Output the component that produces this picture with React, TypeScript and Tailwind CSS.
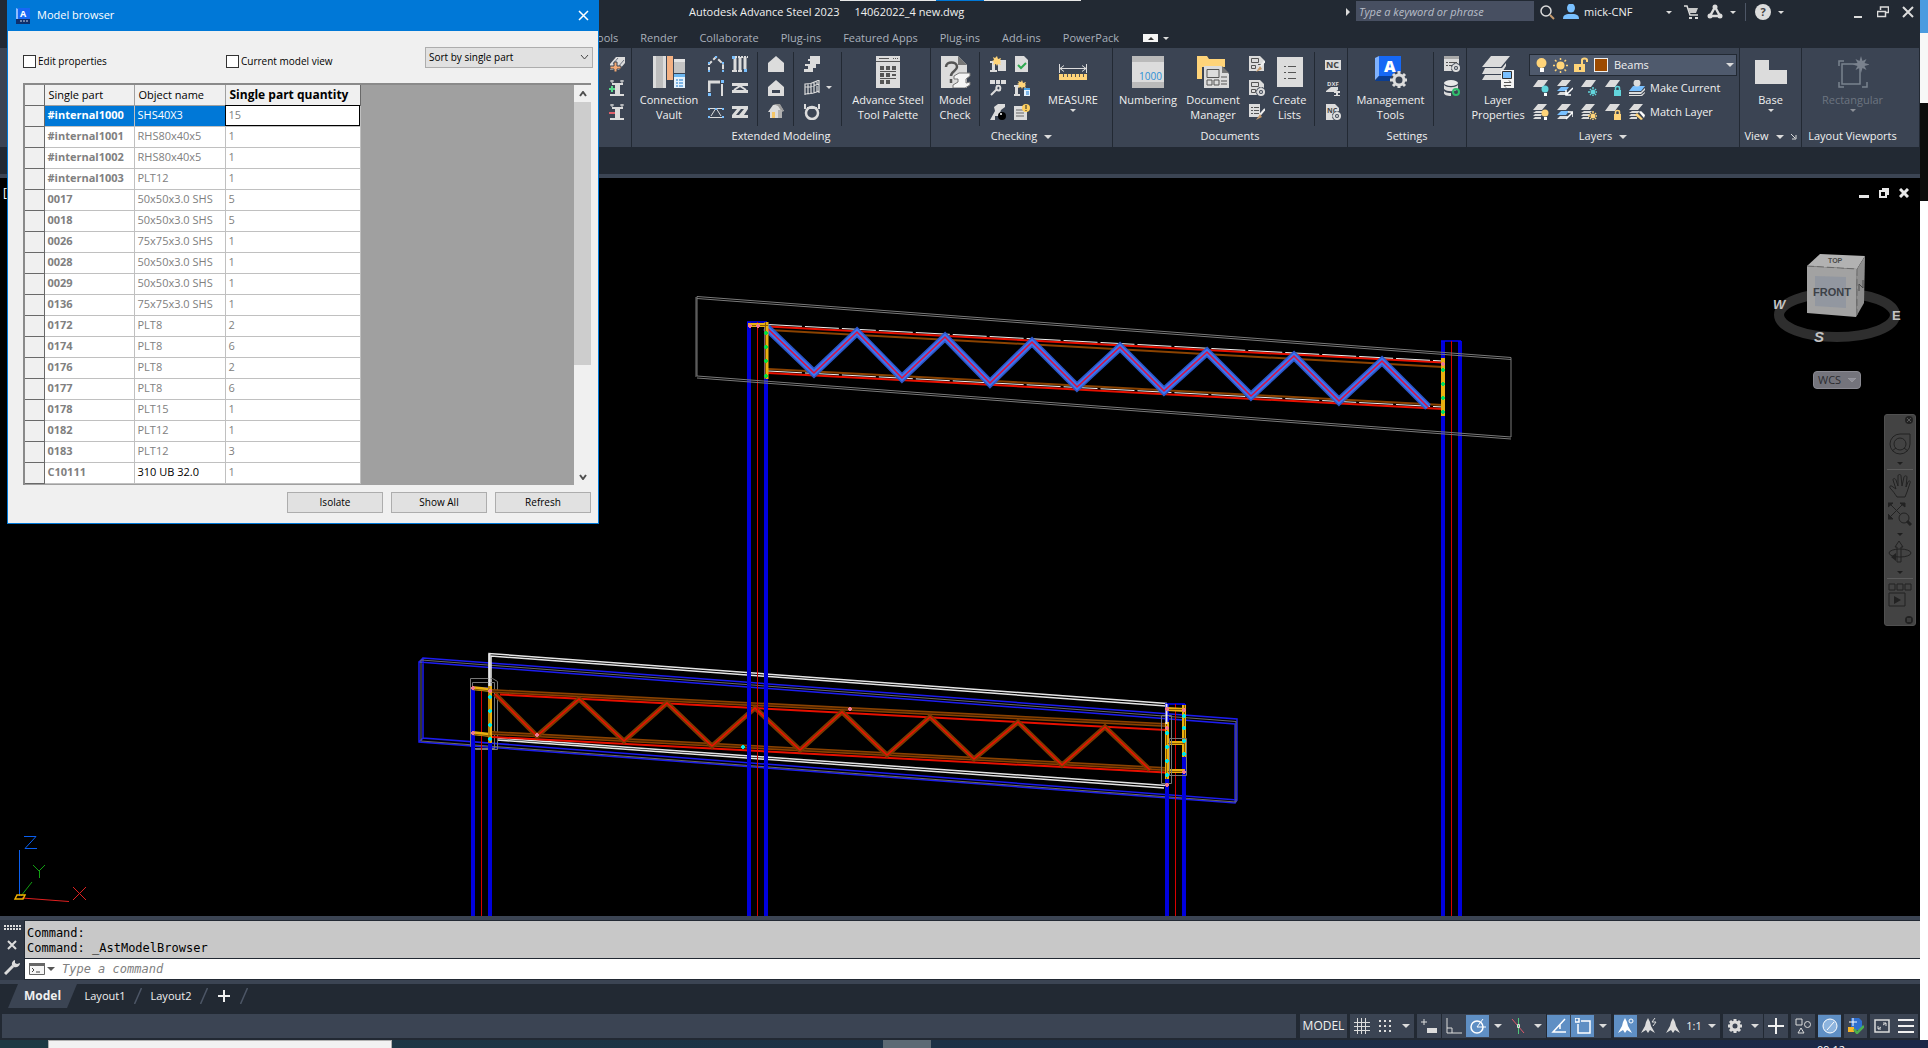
import React, { useState } from 'react';

interface IconProps {
  w?: number;
  h?: number;
  children: React.ReactNode;
}

const Icon: React.FC<IconProps> = ({ w = 16, h = 16, children }) => (
  <svg width={w} height={h} viewBox={`0 0 ${w} ${h}`} fill="none" className="block shrink-0" aria-hidden="true">
    {children}
  </svg>
);

const Caret: React.FC<{ big?: boolean }> = ({ big }) => (
  <svg width={big ? 8 : 6} height={big ? 4 : 3} viewBox="0 0 8 4" className="block shrink-0" aria-hidden="true">
    <path d="M0 0h8L4 4z" fill="#dcdcdc" />
  </svg>
);

const Divider = () => <div className="mt-1 mr-[10px] ml-[9px] h-[74px] w-px shrink-0 bg-[#222933]" />;

const IconColumn: React.FC<{ items: [string, React.ReactNode][] }> = ({ items }) => (
  <div className="flex w-4 shrink-0 flex-col gap-2 pt-2">
    {items.map(([label, icon]) => (
      <button key={label} aria-label={label} className="block h-4 w-4">
        {icon}
      </button>
    ))}
  </div>
);

interface BigButtonProps {
  icon: React.ReactNode;
  lines: string[];
  className: string;
  caret?: boolean;
  disabled?: boolean;
}

const BigButton: React.FC<BigButtonProps> = ({ icon, lines, className, caret, disabled }) => (
  <button
    disabled={disabled}
    className={`flex flex-col items-center pt-2 text-[11px] leading-[15px] whitespace-nowrap ${disabled ? 'text-[#6c7480]' : 'text-[#f0f0f0]'} ${className}`}
  >
    <span className="flex h-8 items-center justify-center">{icon}</span>
    <span className="mt-1 block">
      {lines.map((line) => (
        <span key={line} className="block">{line}</span>
      ))}
    </span>
    {caret && (
      <span className={`mt-[2px] ${disabled ? 'opacity-50' : ''}`}>
        <Caret />
      </span>
    )}
  </button>
);

interface PanelProps {
  title: string;
  className: string;
  caret?: boolean;
  launcher?: boolean;
  children: React.ReactNode;
}

const Panel: React.FC<PanelProps> = ({ title, className, caret, launcher, children }) => (
  <section className={`flex h-full flex-col border-r border-[#222933] ${className}`}>
    <div className="flex h-[78px]">{children}</div>
    <div className="flex h-[21px] items-center justify-center gap-[7px] text-[11px] whitespace-nowrap text-[#f0f0f0]">
      {title}
      {caret && <Caret big />}
      {launcher && (
        <Icon w={6} h={6}>
          <path d="M0 0l4 4M5 1v4H1" stroke="#dcdcdc" />
        </Icon>
      )}
    </div>
  </section>
);

/* ---------- ribbon icons ---------- */

const IBeam: React.FC<{ mark: string; minus?: boolean }> = ({ mark, minus }) => (
  <Icon>
    <path d="M1 14h14v2H1zM6 3h5v11H6zM3 3h11v2H3z" fill="#dcdcdc" />
    <path d="M3 0v3M5 1h-4M13 0v3M11 1h4" stroke="#dcdcdc" />
    <path d={minus ? 'M0 8h6v2H0z' : 'M0 8h2V6h2v2h2v2H4v2H2v-2H0z'} fill={mark} />
  </Icon>
);

const JointIcon = (
  <Icon>
    <path d="M1 8L7 1h9v6l-6 7H1z" fill="#dcdcdc" />
    <path d="M4 8l5-6M9 11l6-7" stroke="#6b7280" />
    <path d="M1 10h4V6h3v4h4v3H8v3H5v-3H1z" fill="#f4a873" stroke="#3b4453" />
  </Icon>
);

const VaultIcon = (
  <Icon w={32} h={32}>
    <path d="M0 0h13v32H0z" fill="#dcdcdc" />
    <path d="M3 0h7v32H3z" fill="#bdbdbd" />
    <path d="M14 0h6v24h-6z" fill="#f4b183" />
    <path d="M21 3h11v14H21z" fill="#c4c4c4" />
    <path d="M21 3h11v3H21z" fill="#e4e4e4" />
    <path d="M21 18h11v14H21z" fill="#e6f3fd" />
    <path d="M21 18h11v3H21z" fill="#6cb7f0" />
    <path d="M23 24h2M26 24h4M23 27h2M26 27h4M23 30h2M26 30h4" stroke="#1779ce" />
  </Icon>
);

const modelingA: [string, React.ReactNode][] = [
  ['Portal frame', <Icon><path d="M1 16V8l7-7 7 7v8" stroke="#dcdcdc" strokeWidth="2" strokeDasharray="5 2" /><path d="M7 0h2v2H7zM0 6h2v2H0zM14 6h2v2h-2zM0 14h2v2H0zM14 14h2v2h-2z" fill="#79c0ff" /></Icon>],
  ['Frame corner', <Icon><path d="M1 12V2h11" stroke="#dcdcdc" strokeWidth="3" /><path d="M14 4v12" stroke="#dcdcdc" strokeWidth="2" /><path d="M13 0h3v3h-3zM0 13h3v3H0z" fill="#79c0ff" /></Icon>],
  ['Truss', <Icon><path d="M0 4.500h16M0 13.500h16M3 12l5-8 5 8" stroke="#dcdcdc" /><path d="M0 4h2v2H0zM7 4h2v2H7zM14 4h2v2h-2zM0 12h2v2H0zM14 12h2v2h-2z" fill="#79c0ff" /></Icon>],
];

const modelingB: [string, React.ReactNode][] = [
  ['Columns', <Icon><path d="M3 1v15M8 1v15M13 1v12" stroke="#dcdcdc" strokeWidth="3" /><path d="M0 1h16M0 15h10" stroke="#dcdcdc" strokeDasharray="2 1" strokeWidth="2" /><path d="M0 0h3v3H0zM12 13h3v3h-3z" fill="#79c0ff" /></Icon>],
  ['Bracing', <Icon><path d="M0 3h16v3H0zM0 10h16v3H0z" fill="#dcdcdc" /><path d="M2 10l6-4 6 4" stroke="#dcdcdc" strokeWidth="2" /></Icon>],
  ['Purlins', <Icon><path d="M0 2h16v3l-4 6h4v3H0v-3l5-6H0zM9 5l-5 6h3l5-6z" fill="#dcdcdc" fillRule="evenodd" /></Icon>],
];

const modelingC: [string, React.ReactNode][] = [
  ['House', <Icon><path d="M8 0l8 7v9H0V7z" fill="#dcdcdc" /></Icon>],
  ['House opening', <Icon><path d="M8 0l8 7v9H0V7zM4 10v3h8v-3z" fill="#dcdcdc" fillRule="evenodd" /></Icon>],
  ['House view', <Icon><path d="M5 1h7l4 6h-2v7H2V8H0z" fill="#dcdcdc" /><path d="M5 0h7l4 7-2 1-4-6z" fill="#9a9a9a" /><path d="M10 6h4v8h-4z" fill="#b0b0b0" /><path d="M4 8h3v6H4z" fill="#f6c767" /></Icon>],
];

const modelingD: [string, React.ReactNode][] = [
  ['Stairs', <Icon><path d="M6 0h10v8h-4v4H9v4H0v-3h4v-3H1V8h5V5H4V3h2z" fill="#dcdcdc" /></Icon>],
  ['Railing', <Icon><path d="M1 15V4c4 0 9-1 14-4v13M1 7c4 0 9-1 14-3M1 14c5 0 10-1 14-3M4 4v10M7 3v11M10 3v10M13 2v10" stroke="#dcdcdc" strokeWidth="1.200" /></Icon>],
  ['Ladder', <Icon><circle cx="8" cy="9" r="6" stroke="#dcdcdc" strokeWidth="2.500" /><path d="M1 0v5M15 0v5M3 4h10" stroke="#dcdcdc" strokeWidth="2" /></Icon>],
];

const PaletteIcon = (
  <Icon w={24} h={32}>
    <path d="M0 0h24v32H0z" fill="#dcdcdc" />
    <path d="M0 5h24v1H0zM3 2h10v1H3zM17 2h1v1h-1zM19 2h1v1h-1zM21 2h1v1h-1z" fill="#555" />
    <path d="M4 10h4v4H4zM10 10h4v4h-4zM16 10h4v4h-4zM4 17h4v4H4zM10 17h4v4h-4zM4 24h4v4H4zM10 24h4v4h-4z" fill="#555" />
    <path d="M4 15h16v1H4zM4 22h16v1H4zM16 18h4v2h-4z" fill="#555" />
  </Icon>
);

const ModelCheckIcon = (
  <Icon w={32} h={32}>
    <path d="M2 0h17l9 9v23H2z" fill="#dcdcdc" />
    <path d="M19 0l9 9h-9z" fill="#777" />
    <path d="M7 11c0-6 11-6 11 0 0 4-6 4-6 9M12 23v4" stroke="#555" strokeWidth="2.500" />
    <path d="M15 20l5-3h11v3l-4 3v4l4-1v3l-5 3H14v-3l5-3v-3h-4z" fill="#f5f5f5" stroke="#777" />
  </Icon>
);

const checkA: [string, React.ReactNode][] = [
  ['Clash', <Icon><path d="M0 5h7v2H5v7h2v2H0v-2h2V7H0zM8 4h8v11H8z" fill="#dcdcdc" /><path d="M7 0l1 3 3-1-1 3 1 1-1 1 1 2-3-1-1 2-1-2-3 1 1-3-2-1 2-1-1-3 2 1z" fill="#ffd479" /></Icon>],
  ['Repair', <Icon><path d="M0 0h5v4H0zM6 0h4v4H6zM11 0h5v4h-5z" fill="#dcdcdc" /><path d="M1 15l6-6M7 6c3-1 4 1 3 4-2 1-5 0-3-4z" stroke="#dcdcdc" strokeWidth="2" /></Icon>],
  ['Weight', <Icon><path d="M4 3l4-3h7v3l-4 3-2 6H5v4H0l5-9z" fill="#dcdcdc" /><circle cx="12" cy="12" r="4" fill="#000" /><circle cx="11" cy="10" r="1" fill="#fff" /></Icon>],
];

const checkB: [string, React.ReactNode][] = [
  ['Audit', <Icon><path d="M1 0h9l4 4v12H1z" fill="#dcdcdc" /><path d="M4 9l3 3 5-5" stroke="#2ea84f" strokeWidth="2" /></Icon>],
  ['Collision list', <Icon><path d="M0 5h6v2H4v7h2v2H0v-2h1V7H0z" fill="#dcdcdc" /><path d="M8 0l1 3 3-1-1 2 1 1-1 1 1 2-3-1-1 2-1-2-3 1 1-3-2-1 2-1-1-2 3 1z" fill="#ffd479" /><path d="M10 8h6v8h-6z" fill="#e6f3fd" /><path d="M10 8h6v2h-6z" fill="#4ba3e8" /><path d="M12 12h3M12 14h3" stroke="#1779ce" /></Icon>],
  ['Warnings', <Icon><path d="M0 2h13v14H0z" fill="#dcdcdc" /><path d="M2 6h7M2 9h8M2 12h8" stroke="#666" /><circle cx="12" cy="4" r="4" fill="#ffcf5e" /><path d="M12 1v4M12 6v1" stroke="#222" /></Icon>],
];

const MeasureIcon = (
  <Icon w={28} h={16}>
    <path d="M0 10h28v6H0z" fill="#ffd479" />
    <path d="M.5 0v9M27.500 0v9" stroke="#dcdcdc" />
    <path d="M1 4.500h26M5 1.500l-4 3 4 3M23 1.500l4 3-4 3" stroke="#dcdcdc" />
    <path d="M4.500 10v3M8.500 10v3M12.500 10v3M16.500 10v3M20.500 10v3M24.500 10v3" stroke="#555" />
  </Icon>
);

const NumberingIcon = (
  <Icon w={32} h={32}>
    <path d="M0 0h32v32H0z" fill="#dcdcdc" />
    <path d="M0 0h32v6H0zM0 26h32v6H0z" fill="#bababa" />
    <text x="7" y="24" fontSize="10" fill="#2b8fd6" fontFamily="Open Sans, sans-serif">1000</text>
  </Icon>
);

const DocManagerIcon = (
  <Icon w={32} h={32}>
    <path d="M0 0h10l2 3h16v8H5v12H0z" fill="#ffd479" />
    <path d="M7 10h17l8 8v14H7z" fill="#dcdcdc" />
    <path d="M25 10l7 7h-7z" fill="#777" />
    <path d="M10 13.500h12v8H10zM10 24h5v5h-5zM17 24h5v5h-5zM24 21h6M24 25h6M24 28h6" stroke="#555" />
  </Icon>
);

const sheet = (
  <>
    <path d="M0 0h11l4 4v11H0z" fill="#dcdcdc" />
    <path d="M2.500 2.500h7v4h-7zM2.500 9.500h4v3h-4zM9 8.500h5" stroke="#555" />
  </>
);
const smallGear = (
  <>
    <circle cx="12" cy="12" r="3" stroke="#3b4453" strokeWidth="4" />
    <circle cx="12" cy="12" r="3" stroke="#dcdcdc" strokeWidth="2" />
    <path d="M12 7v2M12 15v1M7 12h2M15 12h1M9 9l1 1M15 15l-1-1M15 9l-1 1M9 15l1-1" stroke="#dcdcdc" />
  </>
);

const docsA: [string, React.ReactNode][] = [
  ['Drawing styles', <Icon>{sheet}<path d="M16 5l-6 7" stroke="#eee" strokeWidth="2" /><path d="M11 10l-4 6 6-3z" fill="#c59a6c" /></Icon>],
  ['Drawing processes', <Icon>{sheet}{smallGear}</Icon>],
  ['List styles', <Icon><path d="M0 0h11v13H0z" fill="#dcdcdc" /><path d="M2 3.500h2M5 3.500h5M2 6.500h2M5 6.500h5M2 9.500h2M5 9.500h5" stroke="#555" /><path d="M16 5l-6 7" stroke="#eee" strokeWidth="2" /><path d="M11 10l-4 6 6-3z" fill="#c59a6c" /></Icon>],
];

const CreateListsIcon = (
  <Icon w={26} h={30}>
    <path d="M0 0h26v30H0z" fill="#dcdcdc" />
    <path d="M7 9.500h2M11 9.500h8M7 15.500h2M11 15.500h8M7 21.500h2M11 21.500h8" stroke="#555" />
  </Icon>
);

const docsB: [string, React.ReactNode][] = [
  ['NC files', <Icon><path d="M0 4h16v10H0z" fill="#dcdcdc" /><text x="1" y="12" fontSize="9" fontWeight="700" fill="#444" fontFamily="Open Sans, sans-serif">NC</text></Icon>],
  ['DXF files', <Icon><text x="2" y="6" fontSize="6" fontWeight="700" fill="#dcdcdc" fontFamily="Open Sans, sans-serif">DXF</text><path d="M1 11l5-4h7v3l-3 2H1zM9 11h6v2h-2v2h2v1H9v-1h2v-2H9z" fill="#dcdcdc" /></Icon>],
  ['NC settings', <Icon><path d="M1 0h9l4 4v12H1z" fill="#dcdcdc" /><text x="2" y="9" fontSize="7" fontWeight="700" fill="#444" fontFamily="Open Sans, sans-serif">NC</text>{smallGear}</Icon>],
];

const ManagementIcon = (
  <Icon w={32} h={32}>
    <path d="M0 2l4-2v20l-4 4z" fill="#7fb2ff" />
    <path d="M4 0h22v20H4z" fill="#1668f5" />
    <path d="M4 20h22l-3 5H0z" fill="#0b3d91" />
    <text x="9" y="16" fontSize="16" fontWeight="800" fill="#fff" fontFamily="Open Sans, sans-serif">A</text>
    <circle cx="24" cy="24" r="5" stroke="#3b4453" strokeWidth="7" />
    <path d="M24 15v17M15 24h17M18 18l12 12M30 18L18 30" stroke="#dcdcdc" strokeWidth="3" />
    <circle cx="24" cy="24" r="5" fill="#3b4453" stroke="#dcdcdc" strokeWidth="3" />
  </Icon>
);

const settingsCol: [string, React.ReactNode][] = [
  ['Palette settings', <Icon><path d="M0 0h15v15H0z" fill="#dcdcdc" /><path d="M0 0h15v3H0z" fill="#a8a8a8" /><path d="M2 6.500h2M5 6.500h8M2 9.500h2M5 9.500h5" stroke="#555" />{smallGear}</Icon>],
  ['Database', <Icon><ellipse cx="7" cy="3" rx="7" ry="3" fill="#e8e8e8" /><path d="M0 5c3 3 11 3 14 0v4c-3 3-11 3-14 0zM0 11c2 2 5 2 7 2v3c-4 0-7-1-7-3z" fill="#dcdcdc" /><circle cx="12" cy="12" r="3" stroke="#2fbf6b" strokeWidth="2" /></Icon>],
];

const LayerPropsIcon = (
  <Icon w={32} h={32}>
    <path d="M9 0h19l-9 11H0z" fill="#dcdcdc" />
    <path d="M3 12h17l4-5v3l-5 8H0zM3 19h16v5H0z" fill="#dcdcdc" />
    <path d="M19 14h13v18H19z" fill="#f5f5f5" />
    <path d="M20.500 15.500h9v7h-9z" fill="#79c0ff" stroke="#333" />
    <path d="M22 26.500h7l-2-2M29 29.500h-7l2 2" stroke="#555" />
  </Icon>
);

const sheetTop = <path d="M5 0h10l-5 7H0z" fill="#dcdcdc" />;
const stack = <path d="M5 0h9L9 6H0zM3 7h8l-2 2H0zM2 10h7l-1 2H0zM2 13h6v2H0z" fill="#dcdcdc" />;
const stackBlue = (
  <>
    <path d="M5 0h9L9 6H0zM3 12h8l-2 3H0z" fill="#dcdcdc" />
    <path d="M4 7h8l-3 4H0z" fill="#79c0ff" />
  </>
);
const smallLock = (c: string) => (
  <>
    <path d="M9 10h7v6H9z" fill={c} />
    <path d="M10.500 10V8c0-2 4-2 4 0v2" stroke={c} strokeWidth="1.500" />
  </>
);
const smallSun = (c: string) => (
  <>
    <circle cx="12" cy="12" r="2.500" fill={c} />
    <path d="M12 7v2M12 15v1M7 12h2M15 12h1M9 9l1 1M15 15l-1-1M15 9l-1 1M9 15l1-1" stroke={c} strokeWidth="1.500" />
  </>
);
const smallBulb = (c: string) => (
  <>
    <circle cx="12" cy="9" r="3.500" fill={c} />
    <path d="M11 13h3v3h-3z" fill="#fff" />
  </>
);

const layerRows: { label: string; icons: [string, React.ReactNode][] }[] = [
  {
    label: 'Make Current',
    icons: [
      ['Layer off', <Icon>{sheetTop}{smallBulb('#62d5dc')}</Icon>],
      ['Isolate layer', <Icon>{stackBlue}<path d="M16 8l-6 6M9 10v5h5" stroke="#fff" strokeWidth="1.500" /></Icon>],
      ['Freeze layer', <Icon>{sheetTop}{smallSun('#62d5dc')}</Icon>],
      ['Lock layer', <Icon>{sheetTop}{smallLock('#62d5dc')}</Icon>],
      ['Make Current', <Icon><path d="M4 6h12l-4 5H0z" fill="#79c0ff" /><circle cx="8" cy="3" r="3.500" fill="#dcdcdc" /><path d="M0 12h12l4-4v2l-4 4H0zM0 15h12l4-3v1l-3 3H0z" fill="#dcdcdc" /></Icon>],
    ],
  },
  {
    label: 'Match Layer',
    icons: [
      ['Layer on', <Icon>{stack}{smallBulb('#ffd479')}</Icon>],
      ['Unisolate layer', <Icon>{stackBlue}<path d="M9 15l6-6M11 8h5v5" stroke="#fff" strokeWidth="1.500" /></Icon>],
      ['Thaw layer', <Icon>{stack}{smallSun('#ffd479')}</Icon>],
      ['Unlock layer', <Icon>{sheetTop}{smallLock('#ffd479')}</Icon>],
      ['Match Layer', <Icon>{stack}<path d="M8 9l6 6-2 1-6-5z" fill="#ffd479" /><path d="M10 8l5 6 1-3-4-4z" fill="#fff" /></Icon>],
    ],
  },
];

/* ---------- drawing area ---------- */

const upperWeb = 'M766 327L814 373L857 332L902 378L945 337L990 383L1032 342L1077 387L1120 347L1164 391L1207 352L1251 396L1294 356L1339 401L1382 361L1428 407';
const lowerWeb = 'M495 694L537 736L579 699L624 741L667 703L712 746L755 708L800 750L842 712L887 755L930 717L974 759L1018 722L1062 765L1105 727L1150 770';

const Column: React.FC<{ x: number; top: number }> = ({ x, top }) => (
  <>
    <path d={`M${x} ${top}V1400M${x + 17} ${top}V1400`} stroke="#0000dc" strokeWidth="4" />
    <path d={`M${x - 2} ${top}h20`} stroke="#0000ff" strokeWidth="1.500" />
    <path d={`M${x + 8.5} ${top}V1400`} stroke="#d80000" />
  </>
);

const Dots: React.FC<{ x: number; ys: number[]; color: string }> = ({ x, ys, color }) => (
  <>
    {ys.map((y) => (
      <path key={y} d={`M${x - 2} ${y + 1}h4M${x} ${y - 1}v4`} stroke={color} strokeWidth="2" />
    ))}
  </>
);

const Truss = () => (
  <svg className="absolute inset-0" width="1920" height="1200" viewBox="0 178 1920 1200" fill="none" aria-label="Steel model">
    {/* lower truss */}
    <path d="M423 658L1237 719V800L423 738zM419 662L1235 724V803L419 742zM419 662l4-4M419 742l4-4M1235 803l2-3" stroke="#1c1cf0" strokeWidth="1.500" />
    <path d="M421 660L1236 721.500M421 741L1236 802M421 660v81M1236 721v81" stroke="#6a6a6a" />
    <path d="M489 739V653.500L1167 703.500M491 739V656L1166 706M497 738L1166 785.500M497 740L1164 788" stroke="#e6e6e6" strokeWidth="1.500" />
    <path d="M470.500 678.500h22l5 3v68h-22l-5-3zM472.500 682.500h22v66h-22z" stroke="#777" />
    <Column x={473} top={688} />
    <Column x={1167} top={704} />
    <path d="M492 691L1166 725M492 733L1166 769" stroke="#8a4200" strokeWidth="4" />
    <path d="M492 691L1166 725M492 733L1166 769" stroke="#3c1c00" />
    <path d="M500 694.500L1166 730M492 737L1166 772.500" stroke="#e81000" strokeWidth="2" />
    <path d={lowerWeb} stroke="#7c3a00" strokeWidth="5" />
    <path d={lowerWeb} stroke="#f01000" strokeWidth="1.500" />
    <path d="M472 688l19 2M472 733l19 2M490 686v57M1167 709l18 1M1167 743h18M1167 771h18M1167 722v57M1184 705v52" stroke="#eab010" strokeWidth="4" />
    <path d="M489 686v57M472 689l19 2M472 734l19 2M1166.500 722v57M1184.500 705v52M1168 709.500h16M1168 743.500h16M1168 771.500h16" stroke="#8a5c00" />
    <path d="M1161.500 715.500h10v68h-10zM1169.500 738.500h17v37h-17z" stroke="#777" />
    <path d="M489.500 654v32M1166.500 704v20" stroke="#e6e6e6" strokeWidth="2" />
    <Dots x={490} ys={[696, 710, 724, 738]} color="#00eaea" />
    <Dots x={1167} ys={[732, 746, 760, 774]} color="#00eaea" />
    <Dots x={1184} ys={[715, 727, 740, 753]} color="#00eaea" />
    <Dots x={743} ys={[746]} color="#00eaea" />
    <Dots x={473} ys={[687, 732]} color="#f07890" />
    <Dots x={490} ys={[690]} color="#f07890" />
    <Dots x={1167} ys={[708, 727, 784]} color="#f07890" />
    <Dots x={1184} ys={[709, 771]} color="#f07890" />
    <Dots x={850} ys={[708]} color="#f07890" />
    <Dots x={537} ys={[734]} color="#f07890" />

    {/* upper truss */}
    <Column x={749} top={322} />
    <Column x={1443} top={341} />
    <path d="M697 296.500L1511 357.500V437L697 376zM697 298.500L1511 359.500M697 378L1511 439M696 297v80" stroke="#7a7a7a" />
    <path d="M768 330L1443 367M768 369L1443 405" stroke="#8a4200" strokeWidth="2" />
    <path d="M768 326.500L1443 362.500M768 373L1443 409" stroke="#e81000" strokeWidth="2" />
    <path d="M768 324.500L1443 361M768 371L1443 407" stroke="#f0f0f0" strokeDasharray="34 3" />
    <path d={upperWeb} stroke="#2c56c8" strokeWidth="8" />
    <path d={upperWeb} stroke="#3f74f0" strokeWidth="5" />
    <path d={upperWeb} stroke="#e01040" strokeWidth="1.500" />
    <path d="M748 325h20M766.500 322v57M1443 358v58" stroke="#eab010" strokeWidth="4" />
    <path d="M748 325.500h20M765.500 322v57" stroke="#8a5c00" />
    <Dots x={766} ys={[332, 346, 360, 375]} color="#00e040" />
    <Dots x={1443} ys={[369, 383, 397, 411]} color="#00e060" />
    <Dots x={750} ys={[325]} color="#f07890" />
    <Dots x={758} ys={[325]} color="#f07890" />
    <Dots x={1443} ys={[363]} color="#f07890" />

    {/* UCS icon */}
    <path d="M19.500 896V850M24 836.500h12L25 848.500h12" stroke="#0a5ff0" />
    <path d="M21 896l11-14M33 865l6 6 6-6M39.500 871v7" stroke="#12a012" />
    <path d="M22 898l47 3.500M73 887l13 13M86 887l-13 13" stroke="#e02020" />
    <path d="M17 895h8l-2 4h-8z" stroke="#f0b000" strokeWidth="1.500" />
  </svg>
);

const ViewCube = () => (
  <svg className="absolute top-[64px] right-[8px]" width="148" height="108" viewBox="1764 242 148 108" fill="none" aria-label="View cube">
    <ellipse cx="1837" cy="315" rx="58" ry="22" stroke="#2e2e2e" strokeWidth="10" />
    <path d="M1807 266l50 3-1 48-49-4z" fill="#a2a2a2" />
    <path d="M1815 276l31 1v31l-31-2z" fill="#9297a0" />
    <path d="M1807 266l13-12 45 2-8 13z" fill="#b2b2b2" />
    <path d="M1857 269l8-13-1 47-8 14z" fill="#8e8e8e" />
    <path d="M1807 266l50 3v46" stroke="#6a6a6a" strokeDasharray="7 3" />
    <g fontFamily="Liberation Sans, sans-serif" fontWeight="700">
      <text x="1813" y="296" fontSize="11" fill="#3c4147">FRONT</text>
      <text x="1828" y="263" fontSize="7" fill="#4a4a4a">TOP</text>
      <text x="1773" y="309" fontSize="13" fill="#c4c4c4" fontStyle="italic">W</text>
      <text x="1814" y="342" fontSize="15" fill="#c4c4c4" fontStyle="italic">S</text>
      <text x="1892" y="320" fontSize="13" fill="#c4c4c4">E</text>
    </g>
    <path d="M1859 291v-7l4 4v-8" stroke="#4a4a4a" />
  </svg>
);

const NavCaret = () => (
  <span className="mt-[7px]">
    <svg width="6" height="3" viewBox="0 0 6 3" aria-hidden="true"><path d="M0 0h6L3 3z" fill="#1e1e1e" /></svg>
  </span>
);

const NavBar = () => (
  <div className="absolute top-[236px] right-[4px] flex h-[212px] w-8 flex-col items-center rounded-[3px] border border-[#505050] bg-[#434343]">
    <button aria-label="Close" className="mt-px mr-[2px] self-end">
      <Icon w={8} h={8}><circle cx="4" cy="4" r="4" fill="#222" /><path d="M2 2l4 4M6 2L2 6" stroke="#555" /></Icon>
    </button>
    <button aria-label="Steering wheel" className="mt-[9px]">
      <Icon w={22} h={22}><path d="M11 1h10v10A10 10 0 1 1 11 1z" stroke="#222" /><circle cx="11" cy="11" r="6" stroke="#222" /><path d="M3 18l4-3M19 18l-4-3" stroke="#222" /></Icon>
    </button>
    <NavCaret />
    <div className="mt-1 h-px w-[26px] shrink-0 bg-[#5c5c5c]" />
    <button aria-label="Pan" className="mt-1">
      <Icon w={24} h={24}><path d="M9 23c-2-3-4-6-7-9-1-2 1-3 3-1l3 2-3-9c0-2 2-2 3 0l2 6V2c0-2 3-2 3 0l1 10 2-9c1-2 3-1 3 0l-1 10 2-5c1-2 3-1 2 1l-3 9-2 5z" stroke="#222" /></Icon>
    </button>
    <button aria-label="Zoom extents" className="mt-1">
      <Icon w={24} h={24}><path d="M2 2l13 13M15 2L2 15M0 1h5L0 5zM17 1h-5l5 4zM0 17v-5l5 5z" stroke="#222" fill="#222" /><circle cx="16" cy="16" r="5" fill="#434343" stroke="#222" /><path d="M19 19l4 4" stroke="#222" strokeWidth="3" /></Icon>
    </button>
    <NavCaret />
    <button aria-label="Orbit" className="mt-1">
      <Icon w={24} h={24}><path d="M9 22V7H7l4-6 4 6h-2v15z" stroke="#222" /><ellipse cx="12" cy="13" rx="11" ry="4" stroke="#222" /><path d="M3 17l5-4v8z" fill="#222" /></Icon>
    </button>
    <NavCaret />
    <div className="mt-1 h-px w-[26px] shrink-0 bg-[#5c5c5c]" />
    <button aria-label="Show motion" className="mt-1">
      <Icon w={24} h={24}><path d="M1 1h6v6H1zM9 1h6v6H9zM17 1h6v6h-6zM1 10h16v13H1z" stroke="#222" /><path d="M6 13l7 4-7 4z" fill="#222" /></Icon>
    </button>
    <button aria-label="Customize" className="mt-auto mr-[2px] mb-px self-end">
      <Icon w={8} h={8}><circle cx="4" cy="4" r="4" fill="#222" /><path d="M2 3h4M2 5h4" stroke="#555" /></Icon>
    </button>
  </div>
);

/* ---------- model browser dialog ---------- */

interface Part {
  id: string;
  name: string;
  qty: number;
}

const parts: Part[] = [
  { id: '#internal1000', name: 'SHS40X3', qty: 15 },
  { id: '#internal1001', name: 'RHS80x40x5', qty: 1 },
  { id: '#internal1002', name: 'RHS80x40x5', qty: 1 },
  { id: '#internal1003', name: 'PLT12', qty: 1 },
  { id: '0017', name: '50x50x3.0 SHS', qty: 5 },
  { id: '0018', name: '50x50x3.0 SHS', qty: 5 },
  { id: '0026', name: '75x75x3.0 SHS', qty: 1 },
  { id: '0028', name: '50x50x3.0 SHS', qty: 1 },
  { id: '0029', name: '50x50x3.0 SHS', qty: 1 },
  { id: '0136', name: '75x75x3.0 SHS', qty: 1 },
  { id: '0172', name: 'PLT8', qty: 2 },
  { id: '0174', name: 'PLT8', qty: 6 },
  { id: '0176', name: 'PLT8', qty: 2 },
  { id: '0177', name: 'PLT8', qty: 6 },
  { id: '0178', name: 'PLT15', qty: 1 },
  { id: '0182', name: 'PLT12', qty: 1 },
  { id: '0183', name: 'PLT12', qty: 3 },
  { id: 'C10111', name: '310 UB 32.0', qty: 1 },
];

const ModelBrowser = () => {
  const [selected, setSelected] = useState('#internal1000');
  const [editProps, setEditProps] = useState(false);
  const [currentView, setCurrentView] = useState(false);

  return (
    <div role="dialog" aria-label="Model browser" className="absolute top-0 left-[7px] z-10 flex h-[524px] w-[592px] flex-col border border-t-0 border-[#0078d7] bg-[#f0f0f0] text-[11px] text-black">
      <header className="flex h-[31px] shrink-0 items-center bg-[#0078d7] pr-[9px] pl-2 text-white">
        <Icon w={14} h={16}>
          <path d="M0 0l2 1v10l-2 2z" fill="#8fbcff" />
          <path d="M2 0h12v11H2z" fill="#1668f5" />
          <path d="M0 11h14v5H0z" fill="#0d2f6e" />
          <text x="4" y="9" fontSize="9" fontWeight="700" fill="#fff" fontFamily="Open Sans, sans-serif">A</text>
          <path d="M4 13h2M7 13h2M10 13h2" stroke="#d0d8e8" />
        </Icon>
        <h1 className="ml-[7px]">Model browser</h1>
        <button aria-label="Close dialog" className="ml-auto">
          <Icon w={11} h={11}><path d="M1 1l9 9M10 1l-9 9" stroke="#fff" strokeWidth="1.500" /></Icon>
        </button>
      </header>

      <div className="flex h-[52px] shrink-0 items-start pt-4 pr-[5px] pl-[15px] text-[10px]">
        <label className="flex w-[203px] items-center gap-[2px] pt-[7px]">
          <input
            type="checkbox"
            checked={editProps}
            onChange={(e) => setEditProps(e.target.checked)}
            className="h-[13px] w-[13px] appearance-none border border-[#333] bg-white checked:bg-[#0078d7]"
          />
          Edit properties
        </label>
        <label className="flex items-center gap-[2px] pt-[7px]">
          <input
            type="checkbox"
            checked={currentView}
            onChange={(e) => setCurrentView(e.target.checked)}
            className="h-[13px] w-[13px] appearance-none border border-[#333] bg-white checked:bg-[#0078d7]"
          />
          Current model view
        </label>
        <div className="relative ml-auto">
          <select aria-label="Sort order" className="h-[21px] w-[168px] appearance-none border border-[#adadad] bg-[#e1e1e1] pl-[3px] text-[10px]">
            <option>Sort by single part</option>
          </select>
          <svg className="pointer-events-none absolute top-2 right-1" width="9" height="5" fill="none" aria-hidden="true"><path d="M1 0l3.500 4L8 0" stroke="#444" /></svg>
        </div>
      </div>

      <div className="mr-[7px] ml-[15px] flex h-[402px] shrink-0 border-t-2 border-l-2 border-[#8a8a8a] bg-[#a0a0a0]">
        <table className="h-[398px] w-[335px] table-fixed border-collapse">
          <colgroup>
            <col className="w-[19px]" />
            <col className="w-[90px]" />
            <col className="w-[91px]" />
            <col className="w-[135px]" />
          </colgroup>
          <thead>
            <tr className="h-5 bg-[#f0f0f0] text-left">
              <td className="border-r border-b border-[#696969]"></td>
              <th className="border-r border-b border-[#a0a0a0] py-0 pl-1 font-normal">Single part</th>
              <th className="border-r border-b border-[#a0a0a0] py-0 pl-1 font-normal">Object name</th>
              <th className="border-r border-b border-l border-[#696969] py-0 pr-0 pl-1 text-[12px] leading-4 font-bold whitespace-nowrap">Single part quantity</th>
            </tr>
          </thead>
          <tbody>
            {parts.map((part) => {
              const active = part.id === selected;
              return (
                <tr key={part.id} className="h-[21px] cursor-default" onClick={() => setSelected(part.id)}>
                  <td className="border-r border-b border-[#696969] bg-[#f0f0f0] p-0"></td>
                  <td className={`border-r border-b border-[#c0c0c0] py-0 pr-0 pl-[3px] font-bold whitespace-nowrap ${active ? 'bg-[#0078d7] text-white' : 'bg-white text-[#808080]'}`}>
                    {part.id}
                  </td>
                  <td className={`border-r border-b border-[#c0c0c0] py-0 pr-0 pl-[3px] whitespace-nowrap ${active ? 'bg-[#0078d7] text-white' : part.id === 'C10111' ? 'bg-white text-black' : 'bg-white text-[#808080]'}`}>
                    {part.name}
                  </td>
                  <td className={`border-r border-b border-[#c0c0c0] bg-white py-0 pl-[3px] text-[#808080] ${active ? 'outline outline-1 -outline-offset-1 outline-black' : ''}`}>
                    {part.qty}
                  </td>
                </tr>
              );
            })}
          </tbody>
        </table>
        <div className="ml-auto flex w-[17px] flex-col items-center bg-[#f0f0f0]">
          <div className="flex h-[17px] items-center"><Icon w={8} h={6}><path d="M1 5l3-4 3 4" stroke="#505050" strokeWidth="2" /></Icon></div>
          <div className="h-[263px] w-full bg-[#cdcdcd]" />
          <div className="mt-auto flex h-[17px] items-center"><Icon w={8} h={6}><path d="M1 1l3 4 3-4" stroke="#505050" strokeWidth="2" /></Icon></div>
        </div>
      </div>

      <footer className="flex justify-end gap-2 pt-[7px] pr-[7px] text-[10px]">
        {['Isolate', 'Show All', 'Refresh'].map((label) => (
          <button key={label} className="h-[21px] w-[96px] border border-[#adadad] bg-[#e1e1e1]">
            {label}
          </button>
        ))}
      </footer>
    </div>
  );
};

/* ---------- status bar ---------- */

const StatusGroup: React.FC<{ className: string; children: React.ReactNode }> = ({ className, children }) => (
  <div className={`flex h-6 shrink-0 items-center bg-[#3b4453] ${className}`}>{children}</div>
);

interface StatusButtonProps {
  label: string;
  on?: boolean;
  wide?: boolean;
  children: React.ReactNode;
}

const StatusButton: React.FC<StatusButtonProps> = ({ label, on, wide, children }) => (
  <button
    aria-label={label}
    className={`flex items-center justify-center ${wide ? 'h-6 w-6' : 'h-[22px] w-[23px]'} ${on ? 'bg-[#5f8fc4]' : ''}`}
  >
    {children}
  </button>
);

const StatusCaret = () => (
  <button aria-label="More" className="flex h-6 w-[17px] items-center justify-center"><Caret big /></button>
);

const figure = 'M8 0l2 4 1 4 4 7-5-3-2 3-2-3-5 3 4-7 1-4z';

const StatusBar = () => (
  <footer className="flex h-[26px] shrink-0 gap-[3px] bg-[#222933] pr-[2px] pb-[2px] pl-[2px]">
    <div className="h-6 flex-1 bg-[#3b4453]" />
    <StatusGroup className="ml-px w-[47px] justify-center"><button className="text-[12px] text-[#f0f0f0]">MODEL</button></StatusGroup>
    <StatusGroup className="w-[64px]">
      <StatusButton label="Grid" wide><Icon><path d="M3.500 0v16M7.500 0v16M11.500 0v16M0 4.500h16M0 8.500h16M0 12.500h16" stroke="#dcdcdc" /></Icon></StatusButton>
      <StatusButton label="Snap" wide><Icon><path d="M2 3h13M2 8h13M2 13h13" stroke="#dcdcdc" strokeWidth="2" strokeDasharray="2 3" /></Icon></StatusButton>
      <StatusCaret />
    </StatusGroup>
    <StatusGroup className="w-6"><StatusButton label="Dynamic input" wide><Icon><path d="M0 4h6M3 1v6" stroke="#dcdcdc" /><path d="M6 10h10v5H6z" fill="#dcdcdc" /></Icon></StatusButton></StatusGroup>
    <StatusGroup className="-ml-[2px] w-[104px]">
      <StatusButton label="Ortho" wide><Icon><path d="M1 0v15h15M1 10h5v5" stroke="#dcdcdc" /></Icon></StatusButton>
      <StatusButton label="Polar" on><Icon><circle cx="7" cy="9" r="6" stroke="#fff" strokeWidth="1.500" /><path d="M7 9h9M7 9l6-8" stroke="#fff" /></Icon></StatusButton>
      <StatusCaret />
      <StatusButton label="Isometric"><Icon><path d="M2 1l12 14" stroke="#e05a6a" /><path d="M8.500 0v16" stroke="#4fc878" /><path d="M7.500 6.500h2v3h-2z" stroke="#dcdcdc" /></Icon></StatusButton>
      <StatusCaret />
    </StatusGroup>
    <StatusGroup className="-ml-[2px] w-[64px]">
      <StatusButton label="Object snap tracking" on><Icon><path d="M14 1L2 14h13M9 7v4" stroke="#fff" strokeWidth="1.500" /></Icon></StatusButton>
      <span className="w-px" />
      <StatusButton label="Object snap" on><Icon><path d="M6 3h9v12H3V6M0 0h4v4H0z" stroke="#fff" strokeWidth="1.500" /></Icon></StatusButton>
      <StatusCaret />
    </StatusGroup>
    <StatusGroup className="w-[106px]">
      <StatusButton label="Annotation visibility" on><Icon><path d={figure} fill="#fff" transform="translate(-1 0)" /><circle cx="13" cy="3" r="2" stroke="#fff" /></Icon></StatusButton>
      <StatusButton label="Auto scale" wide><Icon><path d={figure} fill="#dcdcdc" transform="translate(-1 0)" /><path d="M14 0l-3 4h4l-3 4" stroke="#dcdcdc" /></Icon></StatusButton>
      <StatusButton label="Annotation scale" wide><Icon><path d={figure} fill="#dcdcdc" /></Icon></StatusButton>
      <button className="w-[18px] text-[11px] text-[#f0f0f0]">1:1</button>
      <StatusCaret />
    </StatusGroup>
    <StatusGroup className="w-[40px]">
      <StatusButton label="Workspace">
        <Icon><path d="M8 1v14M1 8h14M3 3l10 10M13 3L3 13" stroke="#dcdcdc" strokeWidth="3" /><circle cx="8" cy="8" r="4" fill="#3b4453" stroke="#dcdcdc" strokeWidth="3" /></Icon>
      </StatusButton>
      <StatusCaret />
    </StatusGroup>
    <StatusGroup className="-ml-[2px] w-6"><StatusButton label="Annotation monitor" wide><Icon><path d="M8 0v16M0 8h16" stroke="#f0f0f0" strokeWidth="2" /></Icon></StatusButton></StatusGroup>
    <StatusGroup className="w-6"><StatusButton label="Isolate objects" wide><Icon><path d="M1 1h6v6H1zM6 10l3 5H3z" stroke="#dcdcdc" /><circle cx="12.500" cy="6.500" r="3" stroke="#dcdcdc" /></Icon></StatusButton></StatusGroup>
    <StatusGroup className="w-[23px]"><StatusButton label="Graphics performance" on><Icon><circle cx="8" cy="8" r="7" fill="#8db4de" stroke="#fff" /><path d="M5 12l7-8" stroke="#fff" /></Icon></StatusButton></StatusGroup>
    <StatusGroup className="w-[23px]"><StatusButton label="Trusted DWG"><Icon><path d="M3 0h8l3 3v9H3z" fill="#2f6fd0" /><path d="M5 0v8M1 4h8" stroke="#fff" /><path d="M0 9h6v5H0z" fill="#f5b52a" /><path d="M6 11l3 4 7-7" stroke="#4caf50" strokeWidth="2.500" /></Icon></StatusButton></StatusGroup>
    <StatusGroup className="w-[48px]">
      <StatusButton label="Clean screen" wide><Icon><path d="M1 2h14v12H1z" stroke="#dcdcdc" strokeWidth="1.500" /><path d="M9 7l3-2M4 11l3-2M12 8V5H9M4 8v3h3" stroke="#dcdcdc" /></Icon></StatusButton>
      <StatusButton label="Customization" wide><Icon><path d="M0 2h16M0 8h16M0 14h16" stroke="#f0f0f0" strokeWidth="2" /></Icon></StatusButton>
    </StatusGroup>
  </footer>
);

/* ---------- title bar ---------- */

const TitleBar = () => (
  <header className="flex h-6 shrink-0 items-center text-[11px] whitespace-nowrap text-[#f0f0f0]">
    <div className="w-[689px] shrink-0" />
    <span>Autodesk Advance Steel 2023</span>
    <span className="ml-[15px]">14062022_4 new.dwg</span>
    <div className="ml-auto flex items-center">
      <Icon w={4} h={8}><path d="M0 0l4 4-4 4z" fill="#dcdcdc" /></Icon>
      <input
        type="text"
        aria-label="Search"
        placeholder="Type a keyword or phrase"
        className="mb-[2px] ml-[6px] h-5 w-[178px] bg-[#474f61] px-[3px] text-[11px] italic outline-none placeholder:text-[#b8bec8]"
      />
      <button aria-label="Search" className="ml-[6px]"><Icon w={15} h={15}><circle cx="6" cy="6" r="5" stroke="#dcdcdc" strokeWidth="1.500" /><path d="M10 10l4 4" stroke="#c59a6c" strokeWidth="2" /></Icon></button>
      <button className="ml-2 flex items-center gap-[5px]">
        <Icon><ellipse cx="8" cy="4" rx="4" ry="4.500" fill="#79c0ff" /><path d="M0 15c0-5 4-5 8-5s8 0 8 5z" fill="#79c0ff" /></Icon>
        <span className="w-[77px] text-left">mick-CNF</span>
        <Caret />
      </button>
      <button aria-label="App store" className="ml-3"><Icon w={15} h={15}><path d="M0 1h3l3 9h8" stroke="#dcdcdc" strokeWidth="1.500" /><path d="M4 3h10l-2 5H6z" fill="#c8c8c8" /><path d="M5 12h3v2H5zM11 12h3v2h-3z" fill="#dcdcdc" /></Icon></button>
      <button className="ml-2 flex items-center gap-[7px]" aria-label="Autodesk apps"><Icon><path d="M8 3L3 12M8 3l5 9M3 12h10" stroke="#dcdcdc" strokeWidth="2.500" /><circle cx="8" cy="3" r="2.500" fill="#dcdcdc" /><circle cx="3" cy="12" r="2.500" fill="#dcdcdc" /><circle cx="13" cy="12" r="2.500" fill="#dcdcdc" /></Icon><Caret /></button>
      <div className="ml-[9px] h-[18px] w-px bg-[#4d5666]" />
      <button className="ml-[9px] flex items-center gap-[7px]" aria-label="Help">
        <span className="flex h-4 w-4 items-center justify-center rounded-full bg-[#dcdcdc] text-[11px] font-bold text-[#444]">?</span>
        <Caret />
      </button>
      <button aria-label="Minimize" className="ml-[70px] pt-[10px]"><Icon w={8} h={2}><path d="M0 0h8v2H0z" fill="#dcdcdc" /></Icon></button>
      <button aria-label="Restore" className="ml-[15px]"><Icon w={12} h={12}><path d="M3.500 4V1h8v5.500H9M.5 5.500h8v5h-8z" stroke="#dcdcdc" strokeWidth="1.500" /></Icon></button>
      <button aria-label="Close" className="mr-[6px] ml-[13px]"><Icon w={12} h={12}><path d="M1 1l10 10M11 1L1 11" stroke="#dcdcdc" strokeWidth="2" /></Icon></button>
    </div>
  </header>
);

const tabs = ['Tools', 'Render', 'Collaborate', 'Plug-ins', 'Featured Apps', 'Plug-ins', 'Add-ins', 'PowerPack'];

const RibbonTabs = () => (
  <nav className="flex h-6 shrink-0 items-center gap-[22px] pt-1 pl-[591px] text-[11px] whitespace-nowrap text-[#a9b0bb]">
    {tabs.map((tab, i) => (
      <button key={i}>{tab}</button>
    ))}
    <button className="ml-[2px] flex items-center gap-[5px]" aria-label="Minimize ribbon">
      <span className="flex h-2 w-[15px] items-center justify-center bg-[#f5f5f5]">
        <Icon w={6} h={3}><path d="M3 0l3 3H0z" fill="#333" /></Icon>
      </span>
      <Caret />
    </button>
  </nav>
);

const Ribbon = () => (
  <div className="flex h-[99px] shrink-0 bg-[#3b4453]">
    <section className="flex w-[632px] shrink-0 justify-end border-r border-[#222933] pr-[6px]">
      <IconColumn items={[['Joint', JointIcon], ['Add to joint', <IBeam mark="#57d98a" />], ['Remove from joint', <IBeam mark="#e0606a" minus />]]} />
    </section>
    <Panel title="Extended Modeling" className="w-[299px]">
      <BigButton icon={VaultIcon} lines={['Connection', 'Vault']} className="w-[74px]" />
      <div className="ml-[2px] flex gap-2">
        <IconColumn items={modelingA} />
        <IconColumn items={modelingB} />
      </div>
      <Divider />
      <IconColumn items={modelingC} />
      <Divider />
      <IconColumn items={modelingD} />
      <span className="w-3 self-center pl-[6px]"><Caret /></span>
      <div className="mt-1 ml-[9px] h-[74px] w-px shrink-0 bg-[#222933]" />
      <BigButton icon={PaletteIcon} lines={['Advance Steel', 'Tool Palette']} className="flex-1 pl-1" />
    </Panel>
    <Panel title="Checking" caret className="w-[182px]">
      <BigButton icon={ModelCheckIcon} lines={['Model', 'Check']} className="w-[48px]" />
      <div className="mt-1 mr-[10px] h-[74px] w-px shrink-0 bg-[#222933]" />
      <div className="flex gap-2">
        <IconColumn items={checkA} />
        <IconColumn items={checkB} />
      </div>
      <BigButton icon={MeasureIcon} lines={['MEASURE']} caret className="flex-1 pl-1" />
    </Panel>
    <Panel title="Documents" className="w-[235px]">
      <BigButton icon={NumberingIcon} lines={['Numbering']} className="w-[70px]" />
      <BigButton icon={DocManagerIcon} lines={['Document', 'Manager']} className="w-[60px]" />
      <span className="w-[6px]" />
      <IconColumn items={docsA} />
      <BigButton icon={CreateListsIcon} lines={['Create', 'Lists']} className="w-[49px]" />
      <div className="mt-1 mr-[10px] h-[74px] w-px shrink-0 bg-[#222933]" />
      <IconColumn items={docsB} />
    </Panel>
    <Panel title="Settings" className="w-[119px]">
      <BigButton icon={ManagementIcon} lines={['Management', 'Tools']} className="w-[85px]" />
      <div className="mt-1 mr-[10px] h-[74px] w-px shrink-0 bg-[#222933]" />
      <IconColumn items={settingsCol} />
    </Panel>
    <Panel title="Layers" caret className="w-[273px]">
      <BigButton icon={LayerPropsIcon} lines={['Layer', 'Properties']} className="w-[62px]" />
      <div className="flex flex-col pt-[6px]">
        <div className="relative flex h-[22px] w-[208px] items-center gap-[6px] border border-[#222933] bg-[#4f5a6d] pl-[6px]">
          <Icon w={11} h={16}><circle cx="5.500" cy="6" r="5" fill="#ffd479" /><path d="M4 11h4v4H4z" fill="#fff" /></Icon>
          <Icon w={15} h={15}><circle cx="7.500" cy="7.500" r="4" fill="#ffd479" /><path d="M7.500 0v2M7.500 13v2M0 7.500h2M13 7.500h2M2 2l1.500 1.500M13 13l-1.500-1.500M13 2l-1.500 1.500M2 13l1.500-1.500" stroke="#ffd479" strokeWidth="1.500" /></Icon>
          <Icon w={14} h={16}><path d="M0 7h11v8H0z" fill="#ffd479" /><path d="M8 7V3c0-2 5-2 5 0v2" stroke="#ffd479" strokeWidth="2" /><path d="M5 10h2v3H5z" fill="#4f5a6d" /></Icon>
          <span className="h-[14px] w-[14px] border border-[#f0f0f0] bg-[#9c4a00]" />
          <select aria-label="Current layer" className="h-5 flex-1 appearance-none bg-transparent text-[11px] text-[#f0f0f0]">
            <option>Beams</option>
          </select>
          <span className="pointer-events-none absolute right-[2px]"><Caret big /></span>
        </div>
        <div className="flex flex-col gap-2 pt-1 pl-1">
          {layerRows.map((row) => (
            <div key={row.label} className="flex h-4 items-center gap-2">
              {row.icons.slice(0, 4).map(([label, icon]) => (
                <button key={label} aria-label={label}>{icon}</button>
              ))}
              <button className="flex items-center gap-[5px] text-[11px] whitespace-nowrap text-[#f0f0f0]">
                {row.icons[4][1]}
                {row.label}
              </button>
            </div>
          ))}
        </div>
      </div>
    </Panel>
    <Panel title="View" caret launcher className="w-[62px]">
      <BigButton icon={<Icon w={32} h={24}><path d="M0 0h14v10h18v14H0z" fill="#dcdcdc" /></Icon>} lines={['Base']} caret className="flex-1" />
    </Panel>
    <Panel title="Layout Viewports" className="flex-1 pr-4">
      <BigButton
        icon={<Icon w={32} h={32}><path d="M5 8h18v20H5zM2 10V5h5M2 26v5h5M25 31h5v-5" stroke="#7a828e" strokeWidth="1.500" /><path d="M24 0l1.500 5 4-2-2 4 5 1.500-5 1.500 2 4-4-2-1.500 5-1.500-5-4 2 2-4-5-1.500 5-1.500-2-4 4 2z" fill="#7a828e" /></Icon>}
        lines={['Rectangular']}
        caret
        disabled
        className="flex-1"
      />
    </Panel>
  </div>
);

const CommandLine = () => (
  <section className="flex shrink-0 border-y-4 border-[#3b4453] bg-[#2e3643] font-['DejaVu_Sans_Mono',monospace] text-[12px]">
    <div className="flex w-6 shrink-0 flex-col items-center justify-between py-[5px]">
      <Icon w={17} h={5}><path d="M0 1h17M0 4h17" stroke="#dcdcdc" strokeWidth="2" strokeDasharray="2 1" /></Icon>
      <button aria-label="Close command line"><Icon w={10} h={10}><path d="M1 1l8 8M9 1L1 9" stroke="#dcdcdc" strokeWidth="2" /></Icon></button>
      <button aria-label="Customize command line"><Icon w={16} h={16}><path d="M1 15l8-8" stroke="#dcdcdc" strokeWidth="3" /><path d="M11 1c-4 1-4 6-1 7 3 1 6-1 6-4l-3 1-2-1z" fill="#dcdcdc" /></Icon></button>
    </div>
    <div className="flex-1 border border-r-0 border-[#222933] bg-white">
      <div className="h-[38px] border-b border-[#222933] bg-[#c8c8c8] pt-[5px] pl-[2px] leading-[15px] text-black">
        <p>Command:</p>
        <p>Command: _AstModelBrowser</p>
      </div>
      <div className="flex h-5 items-center pl-1">
        <Icon w={16} h={12}><path d="M.5.500h15v11H.5z" fill="#f5f5f5" stroke="#666" /><path d="M0 0h16v3H0z" fill="#666" /><path d="M3 5l2 2-2 2M7 9h4" stroke="#444" /></Icon>
        <svg className="ml-[2px]" width="8" height="4" aria-hidden="true"><path d="M0 0h8L4 4z" fill="#555" /></svg>
        <input type="text" aria-label="Command" placeholder="Type a command" className="ml-[7px] h-5 flex-1 bg-transparent text-[12px] italic outline-none placeholder:text-[#808080]" />
      </div>
    </div>
  </section>
);

const Slash = () => (
  <Icon w={8} h={16}><path d="M7.500 0L.5 16" stroke="#4d5666" strokeWidth="1.500" /></Icon>
);

const LayoutTabs = () => (
  <nav className="flex h-[30px] shrink-0 items-start pl-2 text-[11px] text-[#f0f0f0]">
    <button className="h-6 w-[69px] bg-[#3b4453] text-[12px] font-bold [clip-path:polygon(10px_0,100%_0,59px_100%,0_100%)]">Model</button>
    <div className="flex h-6 items-center gap-2 pl-[7px]">
      <button className="w-[42px]">Layout1</button>
      <Slash />
      <button className="w-[42px]">Layout2</button>
      <Slash />
      <button aria-label="New layout" className="px-[2px]"><Icon w={12} h={12}><path d="M6 0v12M0 6h12" stroke="#f0f0f0" strokeWidth="2" /></Icon></button>
      <Slash />
    </div>
  </nav>
);

const App = () => (
  <div className="relative flex h-screen flex-col overflow-hidden bg-[#222933] font-['Open_Sans','Noto_Sans',sans-serif]">
    <div className="flex min-h-0 flex-1">
      <div className="relative flex min-w-0 flex-1 flex-col">
        <div className="absolute top-0 left-[840px] flex h-px">
          <div className="w-[96px] bg-[#e8e8e8]" />
          <div className="w-[48px] bg-[#0078d7]" />
          <div className="w-[97px] bg-[#e8e8e8]" />
        </div>
        <TitleBar />
        <RibbonTabs />
        <Ribbon />
        <div className="h-[31px] shrink-0 border-b-4 border-[#3b4453]" />
        <main className="relative flex-1 overflow-hidden bg-black">
          <p className="absolute top-2 left-[3px] text-[12px] leading-[14px] text-white">[</p>
          <Truss />
          <div className="absolute top-[10px] right-[11px] flex items-center gap-[10px]">
            <button aria-label="Minimize view" className="pt-[6px]"><Icon w={10} h={3}><path d="M0 0h10v3H0z" fill="#e8e8e8" /></Icon></button>
            <button aria-label="Restore view"><Icon w={10} h={10}><path d="M3 1h6v6M1 3h6v6H1z" stroke="#e8e8e8" strokeWidth="2" /></Icon></button>
            <button aria-label="Close view"><Icon w={10} h={10}><path d="M1 1l8 8M9 1L1 9" stroke="#e8e8e8" strokeWidth="3" /></Icon></button>
          </div>
          <ViewCube />
          <button className="absolute top-[193px] right-[59px] flex h-[18px] w-12 items-center justify-between rounded-[4px] border border-[#8a8a92] bg-[#74747c] px-1 text-[11px] text-[#2c2c30]">
            WCS
            <Icon w={8} h={5}><path d="M0 0h8L4 4z" fill="#8f8f9a" stroke="#aaa" strokeWidth=".5" /></Icon>
          </button>
          <NavBar />
        </main>
        <CommandLine />
        <LayoutTabs />
        <StatusBar />
      </div>
      {/* slice of the window behind */}
      <aside className="flex w-2 shrink-0 flex-col bg-white">
        <div className="h-[33px] bg-[#4a9be0]" />
        <div className="h-[70px] bg-[#f7f7f7]" />
        <div className="h-[98px] bg-[#0c0c0c]" />
      </aside>
    </div>
    <div className="flex h-2 shrink-0 bg-linear-to-r from-[#1d3a44] to-[#1b2747] pl-12">
      <div className="w-[344px] border border-b-0 border-[#b0b0b0] bg-[#f2f2f2]" />
      <div className="ml-[491px] w-[48px] bg-[#5d6a74]" />
      <p className="mr-[83px] ml-auto h-2 overflow-hidden pt-1 text-[11px] leading-3 text-white">09:12</p>
    </div>
    <ModelBrowser />
  </div>
);

export default App;
